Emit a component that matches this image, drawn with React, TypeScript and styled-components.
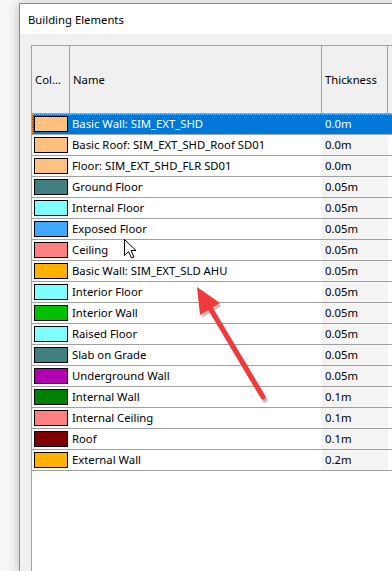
import React from 'react';
import styled, { createGlobalStyle } from 'styled-components';

interface Element {
  name: string;
  color: string;
  thickness: string;
}

const elements: Element[] = [
  { name: 'Basic Wall: SIM_EXT_SHD', color: '#ffc080', thickness: '0.0m' },
  { name: 'Basic Roof: SIM_EXT_SHD_Roof SD01', color: '#ffc080', thickness: '0.0m' },
  { name: 'Floor: SIM_EXT_SHD_FLR SD01', color: '#ffc080', thickness: '0.0m' },
  { name: 'Ground Floor', color: '#408080', thickness: '0.05m' },
  { name: 'Internal Floor', color: '#80ffff', thickness: '0.05m' },
  { name: 'Exposed Floor', color: '#40a8ff', thickness: '0.05m' },
  { name: 'Ceiling', color: '#ff8080', thickness: '0.05m' },
  { name: 'Basic Wall: SIM_EXT_SLD AHU', color: '#ffb000', thickness: '0.05m' },
  { name: 'Interior Floor', color: '#80ffff', thickness: '0.05m' },
  { name: 'Interior Wall', color: '#00c000', thickness: '0.05m' },
  { name: 'Raised Floor', color: '#80ffff', thickness: '0.05m' },
  { name: 'Slab on Grade', color: '#408080', thickness: '0.05m' },
  { name: 'Underground Wall', color: '#b000b0', thickness: '0.05m' },
  { name: 'Internal Wall', color: '#008000', thickness: '0.1m' },
  { name: 'Internal Ceiling', color: '#ff8080', thickness: '0.1m' },
  { name: 'Roof', color: '#800000', thickness: '0.1m' },
  { name: 'External Wall', color: '#ffb000', thickness: '0.2m' },
];

const GlobalStyle = createGlobalStyle`
  body {
    margin: 0;
    font-family: 'Noto Sans', 'Open Sans', sans-serif;
    font-size: 11.3px;
    color: #000;
  }
`;

const Page = styled.div`
  position: relative;
  width: 392px;
  height: 571px;
  overflow: hidden;
  background: #f6f6f6;
  padding: 3px 0 0 19px;
  box-sizing: border-box;
`;

const Window = styled.div`
  display: flex;
  flex-direction: column;
  width: 420px;
  height: 100%;
  border-left: 1px solid #8a8a8a;
  border-top: 1px solid #8a8a8a;
  box-shadow: -2px 0 9px rgba(0, 0, 0, 0.18);
  background: #f0f0f0;
`;

const TitleBar = styled.div`
  display: flex;
  align-items: center;
  height: 30px;
  padding: 1px 0 0 8px;
  box-sizing: border-box;
  background: #fff;
`;

const Client = styled.div`
  flex: 1;
  display: flex;
  padding: 11px 0 0 11px;
`;

const Table = styled.div`
  flex: 1;
  background: #fff;
  border-left: 1px solid #a0a0a0;
  border-top: 1px solid #a0a0a0;
`;

const columns = '38px 252px 66px 60px';

const HeaderRow = styled.div`
  display: grid;
  grid-template-columns: ${columns};
  height: 68px;
  background: #f0f0f0;
  border-bottom: 1px solid #a0a0a0;
  box-sizing: border-box;
`;

const HeaderCell = styled.div`
  display: flex;
  align-items: center;
  padding-left: 3px;
  border-right: 1px solid #a0a0a0;
  white-space: nowrap;
  overflow: hidden;
`;

const Row = styled.div<{ $selected?: boolean }>`
  display: grid;
  grid-template-columns: ${columns};
  height: 21px;
  box-sizing: border-box;
  border-bottom: 1px solid #a0a0a0;
  background: ${({ $selected }) => ($selected ? '#0078d7' : '#fff')};
  color: ${({ $selected }) => ($selected ? '#fff' : '#000')};
  outline: ${({ $selected }) => ($selected ? '1px dotted #f0a060' : 'none')};
  outline-offset: -1px;
`;

const SwatchCell = styled.div`
  display: flex;
  padding: 2px 0 0 2px;
`;

const Swatch = styled.div<{ $color: string }>`
  width: 34px;
  height: 16px;
  box-sizing: border-box;
  border: 1px solid #000;
  background: ${({ $color }) => $color};
`;

const NameCell = styled.div`
  display: flex;
  align-items: center;
  padding: 0 0 2px 2px;
  white-space: nowrap;
`;

const ThicknessCell = styled.div<{ $selected?: boolean }>`
  display: flex;
  align-items: center;
  padding: 0 0 2px 3px;
  background: ${({ $selected }) => ($selected ? 'transparent' : '#f4f4f4')};
`;

const CheckCell = styled.div`
  display: flex;
  align-items: center;
  padding-left: 4px;
`;

const CheckBox = styled.div<{ $selected?: boolean }>`
  width: 12px;
  height: 12px;
  box-sizing: border-box;
  border: 1px solid #a0a0a0;
  background: ${({ $selected }) => ($selected ? '#e0e8f0' : '#f4f4f4')};
`;

const Overlay = styled.svg`
  position: absolute;
  left: 0;
  top: 0;
  pointer-events: none;
`;

const App: React.FC = () => {
  return (
    <>
      <GlobalStyle />
      <Page>
        <Window>
          <TitleBar>Building Elements</TitleBar>
          <Client>
            <Table>
              <HeaderRow>
                <HeaderCell>Col...</HeaderCell>
                <HeaderCell>Name</HeaderCell>
                <HeaderCell>Thickness</HeaderCell>
                <HeaderCell />
              </HeaderRow>
              {elements.map((el, index) => (
                <Row key={index} $selected={index === 0}>
                  <SwatchCell>
                    <Swatch $color={el.color} />
                  </SwatchCell>
                  <NameCell>{el.name}</NameCell>
                  <ThicknessCell $selected={index === 0}>{el.thickness}</ThicknessCell>
                  <CheckCell>
                    <CheckBox $selected={index === 0} />
                  </CheckCell>
                </Row>
              ))}
            </Table>
          </Client>
        </Window>

        {/* mouse pointer */}
        <Overlay width="392" height="571" viewBox="0 0 392 571">
          <path
            d="M124.5 239.5 L124.5 255.5 L128.5 251.5 L131.5 258 L134 257 L131 250.5 L136 250.5 Z"
            fill="#fff"
            stroke="#000"
            strokeWidth="1"
            strokeLinejoin="miter"
          />
          {/* red annotation arrow */}
          <g transform="translate(2 3)" opacity="0.25">
            <line x1="263" y1="397" x2="207" y2="303" stroke="#000" strokeWidth="5" strokeLinecap="round" />
            <polygon points="197,287 219.5,303 200.5,314.5" fill="#000" />
          </g>
          <line x1="263" y1="397" x2="207" y2="303" stroke="#f03a3c" strokeWidth="5" strokeLinecap="round" />
          <polygon points="197,287 220,303 200,315" fill="#f03a3c" />
        </Overlay>
      </Page>
    </>
  );
};

export default App;
